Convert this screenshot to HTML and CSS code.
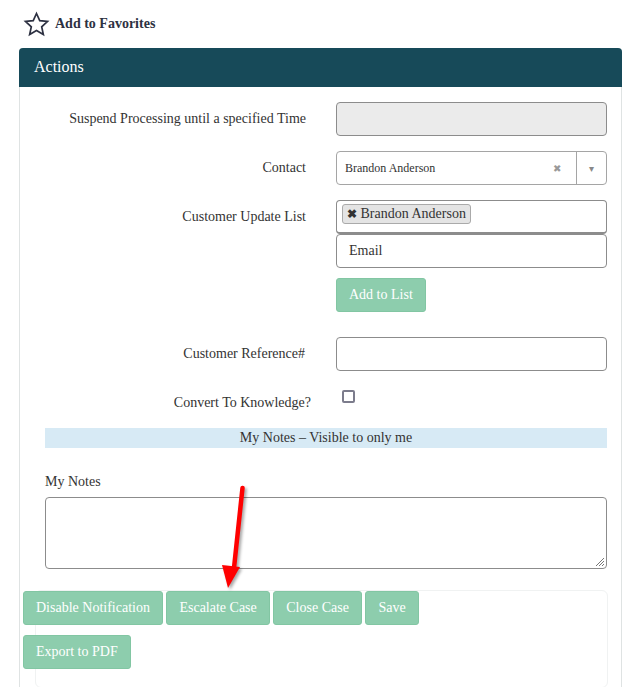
FILE: index.html
```html
<!DOCTYPE html>
<html lang="en">
<head>
    <meta charset="UTF-8">
    <meta name="viewport" content="width=device-width, initial-scale=1.0">
    <title>Case Actions</title>
    <link rel="stylesheet" href="styles.css">
</head>
<body>
    <div class="favoritos">
        <svg class="estrella" width="27" height="27" viewBox="0 0 24 24">
            <polygon points="12,2.2 14.9,8.6 21.8,9.3 16.6,14 18.1,20.9 12,17.4 5.9,20.9 7.4,14 2.2,9.3 9.1,8.6" fill="none" stroke="#2d3142" stroke-width="1.5" stroke-linejoin="miter"/>
        </svg>
        <span>Add to Favorites</span>
    </div>

    <div class="panel">
        <div class="panel-titulo">Actions</div>
        <div class="panel-cuerpo">
            <div class="fila">
                <label>Suspend Processing until a specified Time</label>
                <div class="campo deshabilitado"></div>
            </div>
            <div class="fila">
                <label>Contact</label>
                <div class="campo selector">
                    <span class="valor">Brandon Anderson</span>
                    <span class="quitar">&#x2716;</span>
                    <span class="flecha">&#9662;</span>
                </div>
            </div>
            <div class="fila fila-lista">
                <label>Customer Update List</label>
                <div>
                    <div class="campo etiquetas">
                        <span class="etiqueta"><b>&#x2716;</b> Brandon Anderson</span>
                    </div>
                    <div class="campo texto">Email</div>
                    <button class="boton agregar">Add to List</button>
                </div>
            </div>
            <div class="fila">
                <label class="ajuste-ref">Customer Reference#</label>
                <div class="campo"></div>
            </div>
            <div class="fila fila-check">
                <label class="ajuste-check">Convert To Knowledge?</label>
                <div><span class="casilla"></span></div>
            </div>
            <div class="aviso">My Notes &ndash; Visible to only me</div>
            <div class="notas-titulo">My Notes</div>
            <div class="notas">
                <svg class="tirador" width="10" height="10" viewBox="0 0 10 10">
                    <path d="M9 1 L1 9 M9 4 L4 9 M9 7 L7 9" stroke="#777" stroke-width="1"/>
                </svg>
            </div>
        </div>
        <div class="tarjeta">
            <div class="botones">
                <button class="boton">Disable Notification</button>
                <button class="boton">Escalate Case</button>
                <button class="boton">Close Case</button>
                <button class="boton">Save</button>
            </div>
            <div class="botones segunda">
                <button class="boton">Export to PDF</button>
            </div>
        </div>
    </div>

    <svg class="flecha-roja" width="44" height="115" viewBox="0 0 44 115">
        <line x1="27.5" y1="8" x2="19" y2="88" stroke="#f00" stroke-width="4.5" stroke-linecap="round"/>
        <polygon points="7,85 25,87 13,108" fill="#f00"/>
    </svg>
</body>
</html>
```

FILE: styles.css
```css
body {
    margin: 0;
    background-color: #fff;
    font-family: "Liberation Serif", "Times New Roman", serif;
    font-size: 14px;
    color: #333;
    position: relative;
    width: 632px;
    height: 687px;
    overflow: hidden;
}
.favoritos {
    display: flex;
    align-items: center;
    gap: 5px;
    padding: 11px 0 0 23px;
    height: 27px;
    margin-bottom: 10px;
    font-weight: bold;
    color: #2d3142;
}
.favoritos span {
    margin-top: -2px;
}
.estrella {
    display: block;
}
.panel {
    margin-left: 19px;
    width: 601px;
    border: 1px solid #dfe3e3;
    border-top: none;
    border-radius: 4px 4px 0 0;
}
.panel-titulo {
    background-color: #174a59;
    color: white;
    font-size: 16px;
    height: 39px;
    line-height: 38px;
    padding-left: 15px;
    border-radius: 4px 4px 0 0;
    margin: 0 -1px;
}
.panel-cuerpo {
    padding: 15px 14px 0 25px;
}
.fila {
    display: grid;
    grid-template-columns: 261px 1fr;
    column-gap: 30px;
    align-items: center;
    margin-bottom: 15px;
}
.fila label {
    text-align: right;
}
.fila-lista {
    align-items: start;
    margin-bottom: 25px;
}
.fila-lista label {
    line-height: 34px;
}
.ajuste-ref {
    margin-right: 1px;
}
.fila-check {
    align-items: start;
    margin-bottom: 15px;
}
.ajuste-check {
    margin-right: -5px;
    margin-top: 7px;
    line-height: 20px;
}
.campo {
    box-sizing: border-box;
    height: 34px;
    border: 1px solid #8c8c8c;
    border-radius: 4px;
    background-color: #fff;
}
.deshabilitado {
    background-color: #ebebeb;
}
.selector {
    display: flex;
    align-items: center;
    border-color: #a5a5a5;
    font-size: 12px;
}
.selector .valor {
    flex: 1;
    padding-left: 8px;
}
.selector .quitar {
    color: #999;
    font-size: 10px;
    width: 39px;
    text-align: center;
}
.selector .flecha {
    border-left: 1px solid #a5a5a5;
    height: 100%;
    width: 29px;
    display: flex;
    align-items: center;
    justify-content: center;
    color: #888;
    font-size: 10px;
}
.etiquetas {
    padding: 3px 5px;
    border-bottom-width: 2px;
}
.etiqueta {
    display: inline-block;
    background-color: #e4e4e4;
    border: 1px solid #aaa;
    border-radius: 3px;
    padding: 0 4px;
    line-height: 18px;
    color: #333;
}
.etiqueta b {
    font-size: 12px;
}
.texto {
    line-height: 32px;
    padding-left: 12px;
}
.boton {
    font-family: "Liberation Serif", "Times New Roman", serif;
    font-size: 14px;
    color: white;
    background-color: #8dcdad;
    border: 1px solid #82c6a3;
    border-radius: 3px;
    height: 34px;
    padding: 0 12px;
    cursor: pointer;
}
.agregar {
    margin-top: 10px;
}
.casilla {
    display: block;
    box-sizing: border-box;
    width: 13px;
    height: 13px;
    margin: 4px 0 0 6px;
    border: 2px solid #7c7c8c;
    border-radius: 2px;
}
.aviso {
    background-color: #d7eaf5;
    text-align: center;
    line-height: 20px;
    height: 20px;
}
.notas-titulo {
    margin-top: 24px;
    line-height: 20px;
}
.notas {
    position: relative;
    box-sizing: border-box;
    margin-top: 5px;
    height: 72px;
    border: 1px solid #8c8c8c;
    border-radius: 4px;
}
.tirador {
    position: absolute;
    right: 1px;
    bottom: 1px;
}
.tarjeta {
    margin: 21px 13px 10px 15px;
    height: 96px;
    border: 1px solid #f0f2f2;
    border-radius: 6px;
}
.botones {
    display: flex;
    gap: 3.5px;
    margin-left: -13px;
}
.segunda {
    margin-top: 10px;
}
.flecha-roja {
    position: absolute;
    left: 215px;
    top: 480px;
    filter: drop-shadow(2px 2px 1.5px rgba(0, 0, 0, 0.35));
    pointer-events: none;
}
```
